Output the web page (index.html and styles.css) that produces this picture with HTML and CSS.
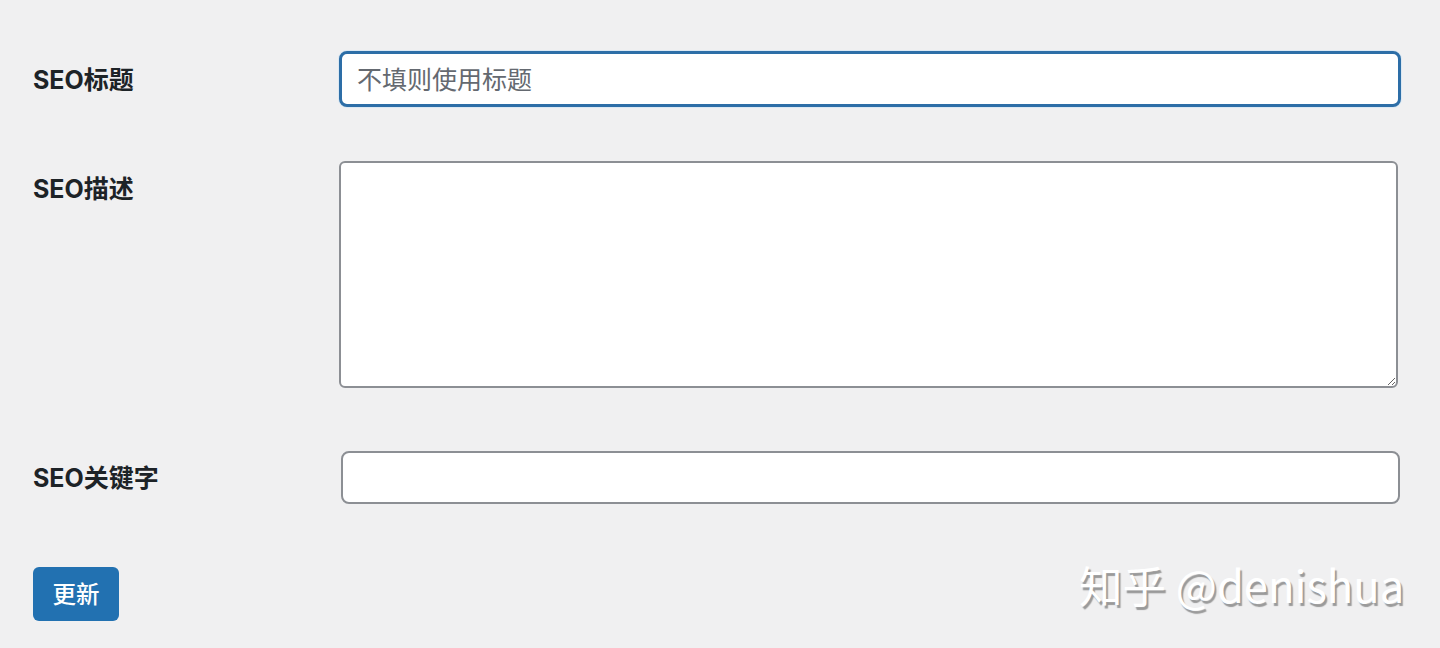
FILE: index.html
```html
<!DOCTYPE html>
<html lang="zh-CN">
<head>
<meta charset="utf-8">
<title>SEO</title>
<link rel="stylesheet" href="styles.css">
</head>
<body>
<form class="form">
  <div class="row row-title">
    <label class="label" for="t">SEO标题</label>
    <input class="field field-focus" id="t" type="text" placeholder="不填则使用标题">
  </div>
  <div class="row row-desc">
    <label class="label label-top" for="d">SEO描述</label>
    <textarea class="field area" id="d"></textarea>
  </div>
  <div class="row row-kw">
    <label class="label" for="k">SEO关键字</label>
    <input class="field field-kw" id="k" type="text">
  </div>
  <div class="actions">
    <button class="btn" type="button">更新</button>
  </div>
</form>
<div class="watermark">知乎 @denishua</div>
</body>
</html>
```
FILE: styles.css
```css
html, body {
  margin: 0;
  padding: 0;
  background: #f0f0f1;
  width: 1440px;
  height: 648px;
  overflow: hidden;
  font-family: -apple-system, "Inter", "Noto Sans CJK SC", sans-serif;
}
.form {
  padding: 51px 39px 0 33px;
}
.row {
  display: flex;
  align-items: center;
}
.label {
  width: 306px;
  flex: none;
  font-size: 25px;
  font-weight: 700;
  color: #1d2327;
  margin-top: -3px;
}
.label-top {
  align-self: flex-start;
  padding-top: 8px;
  margin-top: 0;
}
.field {
  box-sizing: border-box;
  flex: 1;
  background: #fff;
  border: 2px solid #8c8f94;
  border-radius: 7px;
  font-family: "Noto Sans CJK SC", sans-serif;
  font-size: 25px;
  color: #2c3338;
  outline: none;
  margin: 0;
}
.field-focus {
  height: 56px;
  border: 3px solid #2d6ea7;
  border-radius: 8px;
  padding: 0 15px 3px;
  box-shadow: 0 0 0 1px #dbe8f3;
}
.field-focus::placeholder {
  color: #646970;
}
.row-desc {
  margin-top: 54px;
}
.area {
  height: 227px;
  resize: vertical;
  margin-right: 3px;
  border-radius: 6px;
}
.row-kw {
  margin-top: 63px;
}
.field-kw {
  height: 53px;
  margin-left: 2px;
  margin-right: 1px;
  border-radius: 8px;
}
.actions {
  margin-top: 63px;
}
.btn {
  width: 86px;
  height: 54px;
  background: #2271b1;
  border: none;
  border-radius: 6px;
  color: #fff;
  font-family: "Noto Sans CJK SC", sans-serif;
  font-size: 23.5px;
  font-weight: 500;
  padding: 0 0 2px;
}
.watermark {
  position: absolute;
  left: 1079px;
  top: 553px;
  font-family: "Noto Sans CJK SC", sans-serif;
  font-size: 43.5px;
  color: #ffffff;
  text-shadow: 2px 3px 1px #9a9a9a;
  white-space: nowrap;
}
```
